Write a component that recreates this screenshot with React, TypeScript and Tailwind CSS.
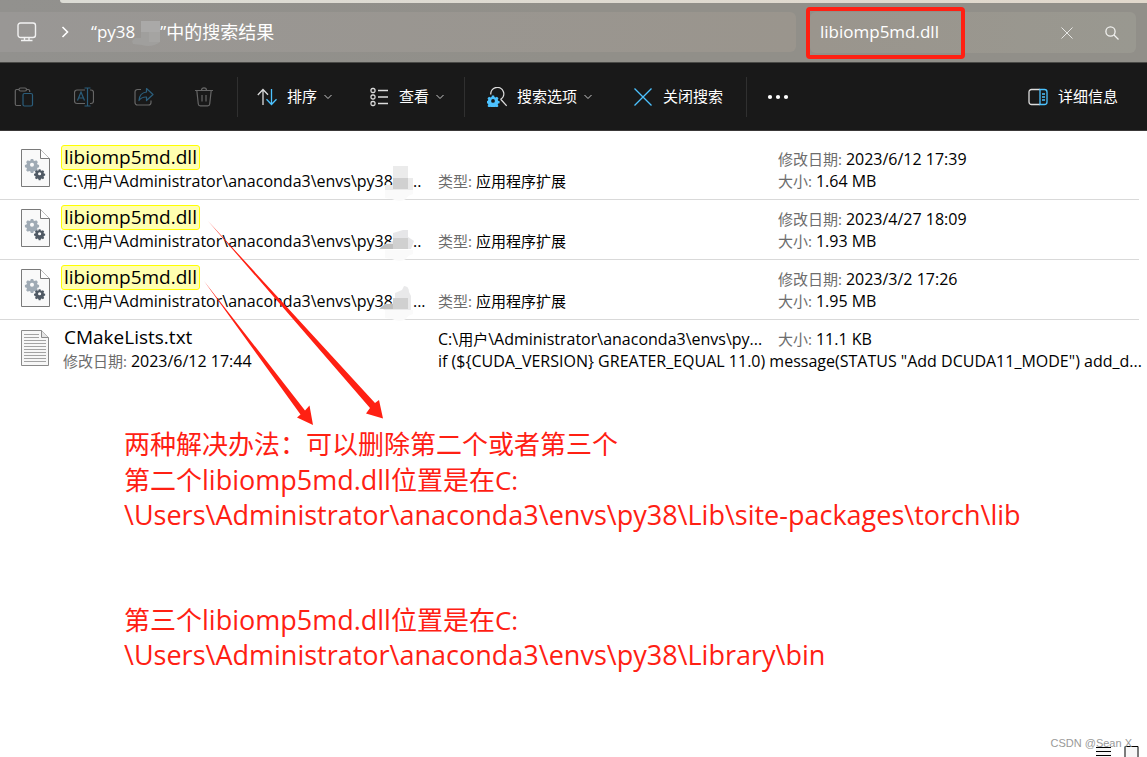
import { FC, ReactNode } from "react";

type DllFile = {
  name: string;
  dots: string;
  date: string;
  size: string;
  blur: number;
};

const dllFiles: DllFile[] = [
  { name: "libiomp5md.dll", dots: "..", date: "2023/6/12 17:39", size: "1.64 MB", blur: 0 },
  { name: "libiomp5md.dll", dots: "..", date: "2023/4/27 18:09", size: "1.93 MB", blur: 1 },
  { name: "libiomp5md.dll", dots: "...", date: "2023/3/2 17:26", size: "1.95 MB", blur: 2 },
];

const gearPath =
  "M-1.3 -6h2.6l.4 1.7 1.3.6 1.6-.9 1.8 1.8-.9 1.6.5 1.2 1.7.5v2.4l-1.7.5-.5 1.2.9 1.6-1.8 1.8-1.6-.9-1.3.6-.4 1.6h-2.6l-.4-1.6-1.3-.6-1.6.9-1.8-1.8.9-1.6-.5-1.2-1.7-.5v-2.4l1.7-.5.5-1.2-.9-1.6 1.8-1.8 1.6.9 1.3-.6zM0-1.9a2.2 2.2 0 1 0 0 4.4 2.2 2.2 0 1 0 0-4.4z";

const DllIcon: FC = () => (
  <svg width="30" height="38" viewBox="0 0 30 38" className="shrink-0">
    <path d="M.5 .5h19l9 9v28h-28z" fill="#f9f9f9" stroke="#7a7a7a" />
    <path d="M19.5 .5v9h9" fill="#fff" stroke="#7a7a7a" />
    <path d={gearPath} transform="translate(11 15.5) scale(.92)" fill="#9faab4" fillRule="evenodd" />
    <path d={gearPath} transform="translate(18.6 24.5) scale(.72)" fill="#505a64" fillRule="evenodd" />
  </svg>
);

const TxtIcon: FC = () => (
  <svg width="30" height="38" viewBox="0 0 30 38" className="shrink-0">
    <path d="M.5 .5h20l7 7v28h-27z" fill="#f7f7f7" stroke="#8a8a8a" />
    <path d="M20.5 .5v7h7" fill="#e4e4e4" stroke="#8a8a8a" />
    <path
      d="M3 4.5h15M3 7.5h15M3 10.5h22M3 13.5h22M3 16.5h22M3 19.5h22M3 22.5h22M3 25.5h22M3 28.5h22M3 31.5h22"
      stroke="#a3a3a3"
    />
  </svg>
);

const Mosaic: FC<{ kind: number }> = ({ kind }) => (
  <svg width="20" height="36" viewBox="0 0 20 36" className="-mt-1 -mb-8 h-9 shrink-0 overflow-visible">
    <path d="M-8 24h28v4q-6 2-7 5-6 4-14 0l-7-1z" fill="#fafafa" />
    {kind === 0 && <path d="M0 0h15v12h5v12h-28v-5h8z" fill="#ebebeb" />}
    {kind === 1 && <path d="M0 7l10-3h5v7l6 4-3 8h-26l-5 0 8-6 5-2z" fill="#e6e6e8" />}
    {kind === 2 && <path d="M2 7l7-3 2-4q5 0 5 6l2 4v14h-28l5-5 7-3z" fill="#e9e9ea" />}
    {kind !== 0 && <path d="M-14 23l6-5h8v5z" fill="#bebebe" />}
    <path d="M0 12h15v11h-15z" fill="#d0d0d0" />
  </svg>
);

const Chevron: FC = () => (
  <svg width="8" height="6" viewBox="0 0 8 6" fill="none" stroke="#c8c8c8" className="-ml-[3px]">
    <path d="M.5 1l3.5 3.5 3.5-3.5" />
  </svg>
);

const Divider: FC = () => <div className="h-10 w-px shrink-0 bg-[#303030]" />;

const IconButton: FC<{ label: string; children: ReactNode }> = ({ label, children }) => (
  <button aria-label={label} disabled className="flex h-10 w-12 items-center justify-center">
    <svg width="20" height="20" viewBox="0 0 20 20" fill="none" stroke="#666" strokeWidth="1.2">
      {children}
    </svg>
  </button>
);

const MenuButton: FC<{ label: string; menu?: boolean; children: ReactNode }> = ({
  label,
  menu,
  children,
}) => (
  <button className="flex h-10 shrink-0 items-center gap-[10px] text-[15px] text-white">
    <svg width="20" height="20" viewBox="0 0 20 20" fill="none" stroke="#dcdcdc" strokeWidth="1.3">
      {children}
    </svg>
    {label}
    {menu && <Chevron />}
  </button>
);

const AddressBar: FC = () => (
  <header className="relative flex h-[63px] items-start gap-[14px] border-b border-[#4a4a47] bg-linear-to-r from-[#92918e] via-[#918f89] to-[#918f89] pt-3 pr-[11px]">
    <div className="absolute top-0 right-0 left-[60px] h-[3px] rounded-bl bg-linear-to-r from-[#dcdcd5] to-[#e1d8cc]" />
    <nav className="flex h-10 flex-1 items-center rounded-r-md bg-linear-to-r from-[#999795] to-[#9a958d] pl-[17px] text-[17px] text-white">
      <svg width="20" height="20" viewBox="0 0 20 20" fill="none" stroke="#f2f2f2" strokeWidth="1.4">
        <rect x="1" y="1" width="17.5" height="14.5" rx="2.5" />
        <path d="M7.5 15.5v3M12 15.5v3M4 18.5h11.5" />
      </svg>
      <svg width="8" height="12" viewBox="0 0 8 12" fill="none" stroke="#fff" strokeWidth="1.6" className="ml-6">
        <path d="M1.5 1l5 5-5 5" />
      </svg>
      <span className="ml-[22px] flex items-center">
        “py38
        <svg width="25" height="28" viewBox="0 0 25 28" className="overflow-visible">
          <path d="M6 3h19v21q-8 6-18 3l-9-1-1-3 3-3h6z" fill="#a09f9d" />
          <path d="M6 3h19v11h-19z" fill="#aaa9a8" />
          <path d="M14 14h11v10h-11z" fill="#a5a4a2" />
        </svg>
        ”<span className="text-[18px]">中的搜索结果</span>
      </span>
    </nav>
    <form className="relative flex h-[41px] w-[326px] items-center rounded-md bg-linear-to-r from-[#9a958d] to-[#999890] pr-[17px]">
      <input
        type="text"
        aria-label="搜索"
        defaultValue="libiomp5md.dll"
        className="h-10 min-w-0 flex-1 self-start bg-transparent pb-0.5 pl-[10px] text-[17px] text-white outline-none"
      />
      <button type="button" aria-label="清除" className="mr-[32px]">
        <svg width="12" height="12" viewBox="0 0 12 12" fill="none" stroke="#e6e6e4">
          <path d="M.5 .5l11 11M11.5 .5l-11 11" />
        </svg>
      </button>
      <button type="button" aria-label="开始搜索">
        <svg width="14" height="14" viewBox="0 0 14 14" fill="none" stroke="#f2f2f0" strokeWidth="1.3">
          <circle cx="5.5" cy="5.5" r="4.6" />
          <path d="M9 9l4.5 4.5" />
        </svg>
      </button>
      {/* red marker round the query */}
      <div className="pointer-events-none absolute -top-[5px] -left-1 h-[52px] w-[159px] rounded border-4 border-[#ff2013]" />
    </form>
  </header>
);

const Toolbar: FC = () => (
  <div className="flex h-[68px] items-center border-b border-[#3a3838] bg-[#191919] pr-[29px]">
    <div className="mr-[9px] flex gap-3">
      <IconButton label="粘贴">
        <path d="M7 18.5H2.8a1.5 1.5 0 0 1-1.5-1.500V4a1.500 1.500 0 0 1 1.500-1.500H5M12.500 2.500h1.700a1.500 1.500 0 0 1 1.500 1.500v1" />
        <rect x="5" y="1" width="7.5" height="3" rx="1.5" />
        <rect x="9" y="6.5" width="9.5" height="12.5" rx="1.5" stroke="#2b5e7c" />
      </IconButton>
      <IconButton label="重命名">
        <path d="M11 3H3a2.5 2.5 0 0 0-2.5 2.5v8.5a2.5 2.5 0 0 0 2.5 2.5h8M16 3h1a2.5 2.5 0 0 1 2.5 2.5v8.5a2.5 2.5 0 0 1-2.5 2.5h-1" />
        <path d="M3.5 13.5l3.5-8.5 3.5 8.5M4.8 11h4.4M13.5 1v18M10.5 1h6M10.5 19h6" stroke="#2b5e7c" />
      </IconButton>
      <IconButton label="共享">
        <path d="M7 2.5H3.5a2.5 2.5 0 0 0-2.5 2.5v10.5a2.5 2.5 0 0 0 2.5 2.5h11a2.5 2.5 0 0 0 2.5-2.5v-2" />
        <path
          d="M12.5 1.5l6.500 6-6.500 6v-3.500c-3.500-.2-5.500.8-7.500 3.500.3-5 3-8 7.500-8.500z"
          stroke="#2b5e7c"
          strokeLinejoin="round"
        />
      </IconButton>
      <IconButton label="删除">
        <path d="M1 3.5h18M7.5 3.3a2.5 2.5 0 0 1 5 0M2.8 3.5l1.5 13.5a2 2 0 0 0 2 1.8h7.4a2 2 0 0 0 2-1.8l1.5-13.5M8 8v6.5M12 8v6.5" />
      </IconButton>
    </div>
    <Divider />
    <div className="mr-5 ml-[19px] flex gap-[37px]">
      <MenuButton label="排序" menu>
        <path d="M6 18V2.5M.8 8L6 2.5l5 5.2" />
        <path d="M14.5 2v15.5M9.5 12.3l5 5.2 5-5.2" stroke="#4cc2ff" />
      </MenuButton>
      <MenuButton label="查看" menu>
        <rect x="2" y="1.5" width="4" height="4" rx="1.5" />
        <rect x="2" y="8" width="4" height="4" rx="1.5" />
        <rect x="2" y="14.5" width="4" height="4" rx="1.5" />
        <path d="M9 3.5h10M9 10h10M9 16.5h10" />
      </MenuButton>
    </div>
    <Divider />
    <div className="mr-[23px] ml-[22px] flex gap-[41px]">
      <MenuButton label="搜索选项" menu>
        <path d="M3.8 7.5a6.5 6.5 0 1 1 9.7 5M13.7 12.3l6 6.5" />
        <path
          d={gearPath}
          transform="translate(6 13.7) scale(.86)"
          fill="#4cc2ff"
          stroke="none"
          fillRule="evenodd"
        />
      </MenuButton>
      <MenuButton label="关闭搜索">
        <path d="M1.5 1.5l17 17M18.5 1.5l-17 17" stroke="#4cc2ff" />
      </MenuButton>
    </div>
    <Divider />
    <button aria-label="更多" className="ml-5">
      <svg width="22" height="6" viewBox="0 0 22 6" fill="#fff">
        <circle cx="3" cy="3" r="2.1" />
        <circle cx="11" cy="3" r="2.1" />
        <circle cx="19" cy="3" r="2.1" />
      </svg>
    </button>
    <div className="ml-auto">
      <MenuButton label="详细信息">
        <path d="M12 2.5H3.5a2.5 2.5 0 0 0-2.5 2.5v10a2.5 2.5 0 0 0 2.5 2.5h8.5" />
        <path
          d="M12 2.5h4.5a2.5 2.5 0 0 1 2.5 2.5v10a2.5 2.5 0 0 1-2.5 2.5h-4.5zM14 7h3M14 10h3M14 13h3"
          stroke="#4cc2ff"
        />
      </MenuButton>
    </div>
  </div>
);

const Field: FC<{ label: string; value: string; cjk?: boolean }> = ({ label, value, cjk }) => (
  <p className="h-[22px] truncate">
    <span className="text-[#6d6d6d]">{label}:</span>{" "}
    <span className={cjk ? "" : "text-[16px]"}>{value}</span>
  </p>
);

const rowClass =
  "grid h-[60px] grid-cols-[42px_375px_340px_1fr] pl-[21px] text-[15px] leading-[22px] whitespace-nowrap";

const FileList: FC = () => (
  <ul className="mr-2 pt-[9px]">
    {dllFiles.map((file, index) => (
      <li key={index} className={`${rowClass} border-b border-[#d9d9d9]`}>
        <div className="pt-[9px]">
          <DllIcon />
        </div>
        <div className="pt-[5px]">
          <mark className="-ml-0.5 block h-[25px] w-fit rounded-[3px] border border-[#ffff00] bg-[#ffffb0] px-0.5 text-[19px] leading-[23px] text-black">
            {file.name}
          </mark>
          <p className="flex h-[22px] text-[16px]">
            C:\<span className="text-[15px]">用户</span>\Administrator\anaconda3\envs\py38
            <Mosaic kind={file.blur} />
            {file.dots}
          </p>
        </div>
        <div className="pt-[30px]">
          <Field label="类型" value="应用程序扩展" cjk />
        </div>
        <div className="pt-2">
          <Field label="修改日期" value={file.date} />
          <Field label="大小" value={file.size} />
        </div>
      </li>
    ))}
    <li className={rowClass}>
      <div className="pt-[10px]">
        <TxtIcon />
      </div>
      <div className="pt-[5px]">
        <p className="h-[25px] pl-px text-[19px] leading-[25px]">CMakeLists.txt</p>
        <Field label="修改日期" value="2023/6/12 17:44" />
      </div>
      <div className="col-span-2 pt-2">
        <div className="flex">
          <p className="h-[22px] w-[340px] text-[16px]">
            C:\<span className="text-[15px]">用户</span>\Administrator\anaconda3\envs\py...
          </p>
          <Field label="大小" value="11.1 KB" />
        </div>
        <p className="text-[16px]">
          {'if (${CUDA_VERSION} GREATER_EQUAL 11.0) message(STATUS "Add DCUDA11_MODE") add_d...'}
        </p>
      </div>
    </li>
  </ul>
);

const Arrows: FC = () => (
  <svg
    width="400"
    height="440"
    viewBox="0 0 400 440"
    className="pointer-events-none absolute top-0 left-0"
    fill="#ff2013"
  >
    <path d="M208 221L375 403 379 400 383 418.500 366 413.500 370 408z" />
    <path d="M204 281L305 410.500 309.500 405.500 313 425 297 417.500 300.500 414.500z" />
  </svg>
);

const Note: FC<{ place: string; path: string }> = ({ place, path }) => (
  <>
    <p className="h-[35px]">
      {place}
      <span className="text-[27px]">libiomp5md.dll</span>位置是在C:
    </p>
    <p className="text-[27px]">{path}</p>
  </>
);

export default function App() {
  return (
    <div className="relative flex min-h-screen flex-col overflow-hidden bg-white font-['Open_Sans','Noto_Sans_CJK_SC',sans-serif] text-black">
      <AddressBar />
      <Toolbar />
      <FileList />
      <section className="pt-[47px] pl-[124px] text-[26px] leading-[35px] text-[#ff2013]">
        <p>两种解决办法：可以删除第二个或者第三个</p>
        <Note
          place="第二个"
          path="\Users\Administrator\anaconda3\envs\py38\Lib\site-packages\torch\lib"
        />
        <div className="mt-[70px]">
          <Note place="第三个" path="\Users\Administrator\anaconda3\envs\py38\Library\bin" />
        </div>
      </section>
      <footer className="relative mt-auto flex justify-end gap-[13px] pr-2">
        <button aria-label="列表视图">
          <svg width="15" height="11" viewBox="0 0 15 11" stroke="#000" className="block bg-[#f7f7f7]">
            <path d="M0 1.5h15M0 5.5h15M0 9.5h15" />
          </svg>
        </button>
        <button aria-label="图标视图">
          <svg width="15" height="11" viewBox="0 0 15 11" fill="none" stroke="#000" className="block bg-[#f7f7f7]">
            <path d="M1 11V.5h13V11" />
          </svg>
        </button>
        <span className="absolute right-[15px] bottom-[6px] font-['Liberation_Sans'] text-[11px] leading-4 text-[#999]">
          CSDN @Sean X
        </span>
      </footer>
      <Arrows />
    </div>
  );
}
